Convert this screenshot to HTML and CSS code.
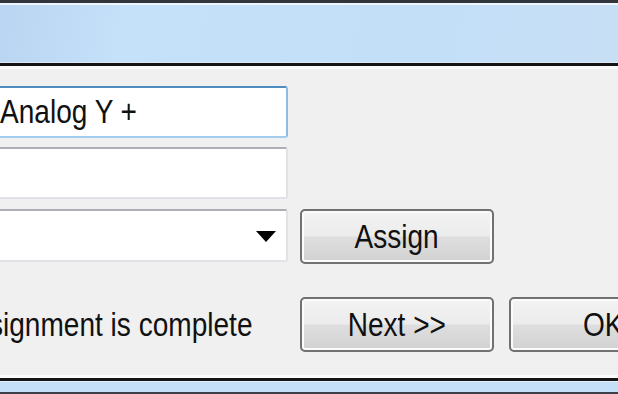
FILE: index.html
```html
<!DOCTYPE html>
<html>
<head>
<meta charset="utf-8">
<link rel="stylesheet" href="styles.css">
</head>
<body>
<div class="window">
  <div class="caption"></div>
  <div class="frame-top"></div>
  <div class="client">
    <div class="row r1">
      <div class="field focus"><span class="txt">Analog Y +</span></div>
    </div>
    <div class="row r2">
      <div class="field"></div>
    </div>
    <div class="row r3">
      <div class="field combo">
        <svg class="arrow" width="20" height="11" viewBox="0 0 20 11"><polygon points="0,0 20,0 10,11" fill="#000"/></svg>
      </div>
      <div class="btn"><span class="txt">Assign</span></div>
    </div>
    <div class="row r4">
      <div class="label"><span class="txt">Assignment is complete</span></div>
      <div class="btn"><span class="txt">Next &gt;&gt;</span></div>
      <div class="btn ok"><span class="txt">OK</span></div>
    </div>
  </div>
  <div class="frame-bottom"></div>
</div>
</body>
</html>
```
FILE: styles.css
```css
html, body {
  margin: 0;
  padding: 0;
}
body {
  width: 618px;
  height: 394px;
  overflow: hidden;
  background: #f0f0f0;
  font-family: "Liberation Sans", Arial, sans-serif;
  font-size: 33px;
  color: #111;
}
.window {
  display: flex;
  flex-direction: column;
  height: 394px;
}
.caption {
  height: 57px;
  border-top: 3px solid #30363c;
  box-shadow: inset 0 2px 0 #eef5fc, inset 0 -1px 0 #dde9f5;
  background: linear-gradient(100deg, #b9d5f1 0%, #c5e0f9 20%, #c3dff8 70%, #c7dff5 100%);
  flex: none;
  box-sizing: content-box;
  padding-bottom: 3px;
}
.frame-top {
  height: 3px;
  background: #141414;
  border-bottom: 3px solid #fafafa;
  flex: none;
}
.client {
  flex: 1;
  display: flex;
  flex-direction: column;
  margin-left: -20px;
}
.row {
  display: flex;
  align-items: flex-start;
  flex: none;
}
.row > * { flex: none; }
.r1 { margin-top: 17px; }
.r2 { margin-top: 9px; }
.r3 { margin-top: 10px; }
.r4 { margin-top: 33px; align-items: center; }
.field {
  width: 308px;
  height: 52px;
  box-sizing: border-box;
  background: #fff;
  border: 2px solid #e0e2e7;
  border-top-color: #adafb4;
  border-radius: 3px;
  display: flex;
  align-items: center;
  padding-left: 18px;
}
.field.focus {
  border-color: #a3cbeb;
  border-top-color: #4f8cc0;
  border-right-color: #8dbbe4;
}
.combo {
  height: 53px;
  justify-content: flex-end;
  padding-right: 10px;
}
.arrow {
  display: block;
  margin-top: 2px;
}
.txt {
  display: inline-block;
  transform: scaleX(0.85);
  transform-origin: left center;
  white-space: nowrap;
}
.btn {
  width: 194px;
  height: 55px;
  box-sizing: border-box;
  margin-left: 12px;
  border: 2px solid #717171;
  border-radius: 5px;
  background: linear-gradient(#f3f3f3 0%, #ececec 48%, #dedede 52%, #d2d2d2 100%);
  box-shadow: inset 0 0 0 2px #fbfbfb;
  display: flex;
  align-items: center;
  justify-content: center;
}
.btn .txt {
  transform-origin: center center;
}
.btn.ok {
  margin-left: 15px;
  justify-content: flex-start;
  padding-left: 72px;
}
.btn.ok .txt { transform-origin: left center; }
.label {
  width: 272px;
  display: flex;
  justify-content: flex-end;
  margin-right: 36px;
}
.label .txt {
  transform-origin: right center;
}
.frame-bottom {
  flex: none;
  border-top: 3px solid #fbfbfb;
  box-shadow: inset 0 -2px 0 #3a4048;
  background: linear-gradient(#141414 0, #141414 3px, #e6f0fa 3px, #e6f0fa 4px, #c4dff8 4px);
  height: 16px;
}
```
